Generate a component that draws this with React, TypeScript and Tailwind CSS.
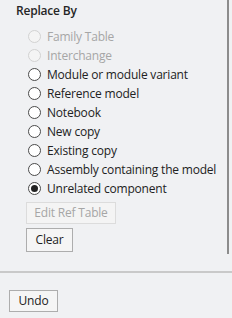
import React from 'react';

type Option = { label: string; disabled?: boolean; checked?: boolean };

const OPTIONS: Option[] = [
  { label: 'Family Table', disabled: true },
  { label: 'Interchange', disabled: true },
  { label: 'Module or module variant' },
  { label: 'Reference model' },
  { label: 'Notebook' },
  { label: 'New copy' },
  { label: 'Existing copy' },
  { label: 'Assembly containing the model' },
  { label: 'Unrelated component', checked: true },
];

const Radio: React.FC<Option> = ({ label, disabled, checked }) => (
  <div className="flex items-center h-[19px]">
    <span
      className={`w-[13px] h-[13px] rounded-full border flex items-center justify-center ${
        disabled ? 'border-[#d2d2d2] bg-[#f4f4f4]' : 'border-[#4a4a4a] bg-white'
      }`}
    >
      {checked && <span className="w-[7px] h-[7px] rounded-full bg-[#222222]" />}
    </span>
    <span className={`ml-[6px] ${disabled ? 'text-[#a6a6a6]' : 'text-[#222222]'}`}>{label}</span>
  </div>
);

export default function App() {
  return (
    <div
      className="w-[232px] h-[318px] bg-[#f0f1f3] flex flex-col text-[12px] leading-none tracking-[-0.2px] overflow-hidden"
      style={{ fontFamily: '"Open Sans", "Noto Sans", sans-serif' }}
    >
      <div className="flex h-[271px]">
        <div className="flex-1 flex flex-col">
          <div className="pl-[16px] pt-[3px] h-[27px] font-semibold text-[#262626] flex items-start">
            <span className="mt-[2px]">Replace By</span>
          </div>
          <div className="pl-[28px] flex flex-col">
            {OPTIONS.map((o) => (
              <Radio key={o.label} {...o} />
            ))}
          </div>
          <div className="pl-[26px] pt-[4px] flex flex-col gap-[4px] items-start">
            <button className="h-[22px] w-[90px] border border-[#dcdcdc] bg-[#f4f4f4] text-[#a6a6a6]">
              Edit Ref Table
            </button>
            <button className="h-[24px] w-[47px] border border-[#adadad] bg-[#f5f5f5] text-[#222222]">
              Clear
            </button>
          </div>
        </div>
        <div className="w-[5px] flex flex-col">
          <div className="h-[254px] w-[2px] bg-[#8c8c8c]" />
        </div>
      </div>
      <div className="h-[2px] bg-[#c9c9c9]" />
      <div className="pl-[9px] pt-[17px]">
        <button className="h-[22px] w-[49px] border border-[#adadad] bg-[#f5f5f5] text-[#222222]">
          Undo
        </button>
      </div>
    </div>
  );
}
